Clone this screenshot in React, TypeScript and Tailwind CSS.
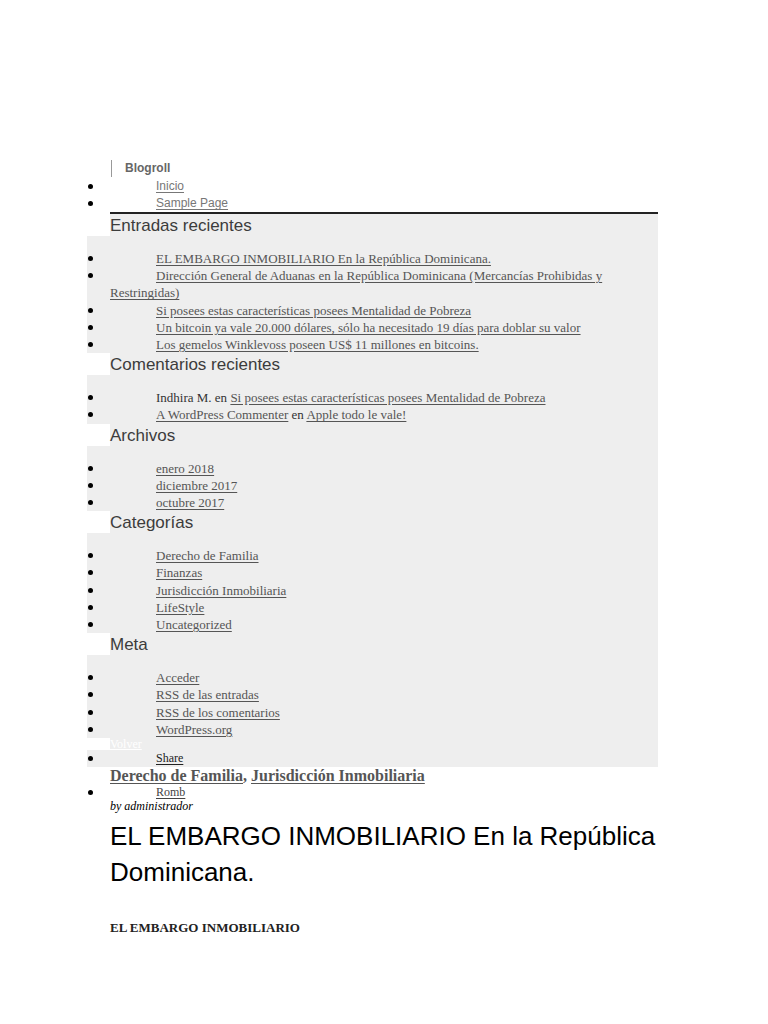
const serif = "font-['Liberation_Serif','Times_New_Roman',serif]";
const sans = "font-['Liberation_Sans',Arial,sans-serif]";

type Item = { text?: string; parts?: { text: string; link?: boolean }[] };

function Bullet() {
  return <span className="absolute left-[1px] top-[6px] h-[5px] w-[5px] rounded-full bg-black" />;
}

function Row({ children, className = "" }: { children: React.ReactNode; className?: string }) {
  return (
    <li className={`relative pl-[23px] indent-[46px] leading-[17.2px] ${className}`}>
      <Bullet />
      {children}
    </li>
  );
}

function Section({ title, items }: { title: string; items: Item[] }) {
  return (
    <>
      <h2 className={`ml-[23px] bg-[#eeeeee] pt-[2px] text-[17px] leading-[20px] text-[#3c3c3c] ${sans}`}>
        {title}
      </h2>
      <ul className={`bg-[#eeeeee] pt-[14px] text-[13px] ${serif}`}>
        {items.map((it, i) => (
          <Row key={i}>
            {it.text ? (
              <a className="text-[#555] underline underline-offset-2">{it.text}</a>
            ) : (
              it.parts!.map((p, j) =>
                p.link ? (
                  <a key={j} className="text-[#555] underline underline-offset-2">
                    {p.text}
                  </a>
                ) : (
                  <span key={j} className="text-[#333]">
                    {p.text}
                  </span>
                )
              )
            )}
          </Row>
        ))}
      </ul>
    </>
  );
}

export default function App() {
  return (
    <div className="min-h-[1024px] bg-white pt-[158px]">
      <div className="ml-[87px] w-[571px]">
        <div className="ml-[24px] flex h-[20px] items-center">
          <span className="h-[17px] w-px bg-[#999]" />
          <span className={`ml-[13px] text-[12px] font-bold text-[#666] ${sans}`}>Blogroll</span>
        </div>
        <ul className={`text-[12px] ${sans}`}>
          <Row className="leading-[17px]">
            <a className="text-[#777] underline underline-offset-2">Inicio</a>
          </Row>
          <Row className="leading-[17px]">
            <a className="text-[#777] underline underline-offset-2">Sample Page</a>
          </Row>
        </ul>
        <div className="ml-[23px] h-[2px] bg-[#222]" />

        <Section
          title="Entradas recientes"
          items={[
            { text: "EL EMBARGO INMOBILIARIO En la República Dominicana." },
            { text: "Dirección General de Aduanas en la República Dominicana (Mercancías Prohibidas y Restringidas)" },
            { text: "Si posees estas características posees Mentalidad de Pobreza" },
            { text: "Un bitcoin ya vale 20.000 dólares, sólo ha necesitado 19 días para doblar su valor" },
            { text: "Los gemelos Winklevoss poseen US$ 11 millones en bitcoins." },
          ]}
        />
        <Section
          title="Comentarios recientes"
          items={[
            {
              parts: [
                { text: "Indhira M. en " },
                { text: "Si posees estas características posees Mentalidad de Pobreza", link: true },
              ],
            },
            {
              parts: [
                { text: "A WordPress Commenter", link: true },
                { text: " en " },
                { text: "Apple todo le vale!", link: true },
              ],
            },
          ]}
        />
        <Section
          title="Archivos"
          items={[{ text: "enero 2018" }, { text: "diciembre 2017" }, { text: "octubre 2017" }]}
        />
        <Section
          title="Categorías"
          items={[
            { text: "Derecho de Familia" },
            { text: "Finanzas" },
            { text: "Jurisdicción Inmobiliaria" },
            { text: "LifeStyle" },
            { text: "Uncategorized" },
          ]}
        />
        <Section
          title="Meta"
          items={[
            { text: "Acceder" },
            { text: "RSS de las entradas" },
            { text: "RSS de los comentarios" },
            { text: "WordPress.org" },
          ]}
        />
        <div className={`ml-[23px] bg-[#eeeeee] text-[12px] leading-[12px] ${serif}`}>
          <a className="text-white underline">Volver</a>
        </div>
        <ul className={`bg-[#eeeeee] text-[12px] ${serif}`}>
          <Row>
            <a className="text-[#222] underline underline-offset-2">Share</a>
          </Row>
        </ul>

        <div className={`ml-[23px] text-[16px] font-bold leading-[17px] text-[#555] ${serif}`}>
          <a className="underline underline-offset-2">Derecho de Familia</a>,{" "}
          <a className="underline underline-offset-2">Jurisdicción Inmobiliaria</a>
        </div>
        <ul className={`text-[12px] ${serif}`}>
          <Row className="leading-[17px]">
            <a className="text-[#444] underline underline-offset-2">Romb</a>
          </Row>
        </ul>
        <p className={`ml-[23px] text-[12px] italic leading-[10px] text-black ${serif}`}>by administrador</p>

        <h1 className={`ml-[23px] mt-[7px] text-[26px] leading-[36px] text-black ${sans}`}>
          EL EMBARGO INMOBILIARIO En la República Dominicana.
        </h1>

        <p className={`ml-[23px] mt-[30px] text-[13px] font-bold leading-[16px] text-[#222] ${serif}`}>
          EL EMBARGO INMOBILIARIO
        </p>
      </div>
    </div>
  );
}
